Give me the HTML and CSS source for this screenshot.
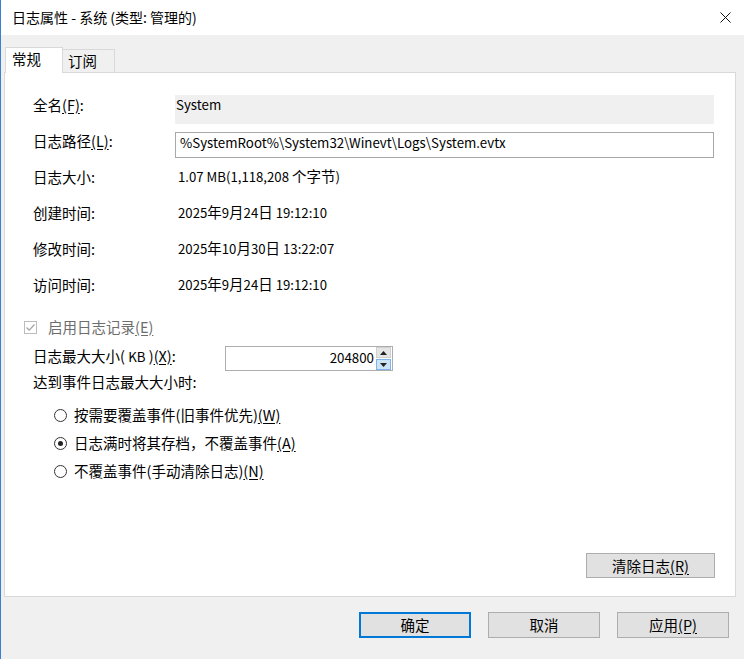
FILE: index.html
```html
<!DOCTYPE html>
<html lang="zh-CN">
<head>
<meta charset="utf-8">
<title>日志属性</title>
<link rel="stylesheet" href="styles.css">
</head>
<body>
<div class="window">
  <div class="titlebar">
    <span class="title">日志属性 - 系统 (类型: 管理的)</span>
    <svg class="close" width="11" height="11" viewBox="0 0 11 11"><path d="M0.5 0.5 L10.5 10.5 M10.5 0.5 L0.5 10.5" stroke="#111" stroke-width="1" fill="none"/></svg>
  </div>
  <div class="content">
    <div class="tabs">
      <div class="tab active">常规</div>
      <div class="tab">订阅</div>
    </div>
    <div class="panel">
      <div class="fields">
        <div class="row row-name">
          <div class="label">全名<u>(F)</u>:</div>
          <div class="readonly">System</div>
        </div>
        <div class="row row-path">
          <div class="label">日志路径<u>(L)</u>:</div>
          <div class="edit">%SystemRoot%\System32\Winevt\Logs\System.evtx</div>
        </div>
        <div class="row row-info first">
          <div class="label">日志大小:</div>
          <div class="value">1.07 MB(1,118,208 <span class="cjk">个字节</span>)</div>
        </div>
        <div class="row row-info">
          <div class="label">创建时间:</div>
          <div class="value">2025<span class="cjk">年</span>9<span class="cjk">月</span>24<span class="cjk">日</span> 19:12:10</div>
        </div>
        <div class="row row-info">
          <div class="label">修改时间:</div>
          <div class="value">2025<span class="cjk">年</span>10<span class="cjk">月</span>30<span class="cjk">日</span> 13:22:07</div>
        </div>
        <div class="row row-info">
          <div class="label">访问时间:</div>
          <div class="value">2025<span class="cjk">年</span>9<span class="cjk">月</span>24<span class="cjk">日</span> 19:12:10</div>
        </div>
      </div>

      <div class="check-row">
        <span class="checkbox"><svg width="11" height="11" viewBox="0 0 11 11"><path d="M1.5 5.5 L4.2 8.2 L9.5 2.5" stroke="#a2a2a2" stroke-width="1.2" fill="none"/></svg></span>
        <span class="disabled">启用日志记录<u>(E)</u></span>
      </div>

      <div class="spin-row">
        <div class="spin-label">日志最大大小( <span class="lat">KB</span> )<u>(X)</u>:</div>
        <div class="spinner">
          <span class="spin-value">204800</span>
          <span class="spin-buttons">
            <span class="spin-btn up"><svg width="7" height="4" viewBox="0 0 7 4"><path d="M0 4 L3.5 0 L7 4 Z" fill="#222"/></svg></span>
            <span class="spin-btn down"><svg width="7" height="4" viewBox="0 0 7 4"><path d="M0 0 L3.5 4 L7 0 Z" fill="#222"/></svg></span>
          </span>
        </div>
      </div>

      <div class="reach-row">达到事件日志最大大小时:</div>

      <div class="radios">
        <div class="radio-row"><span class="radio"></span><span>按需要覆盖事件(旧事件优先)<u>(W)</u></span></div>
        <div class="radio-row"><span class="radio checked"></span><span>日志满时将其存档，不覆盖事件<u>(A)</u></span></div>
        <div class="radio-row"><span class="radio"></span><span>不覆盖事件(手动清除日志)<u>(N)</u></span></div>
      </div>

      <div class="clear-row">
        <button class="btn clear">清除日志<u>(R)</u></button>
      </div>
    </div>
    <div class="footer">
      <button class="btn default">确定</button>
      <button class="btn">取消</button>
      <button class="btn">应用<u>(P)</u></button>
    </div>
  </div>
</div>
</body>
</html>
```

FILE: styles.css
```css
* { box-sizing: border-box; }

html, body {
  margin: 0;
  padding: 0;
}

body {
  font-family: "Noto Sans CJK SC", "Noto Sans", sans-serif;
  font-size: 14.5px;
  line-height: 20px;
  color: #000;
  background: #f0f0f0;
}

u { text-decoration: underline; text-underline-offset: 2px; }

.window {
  width: 744px;
  height: 659px;
  border-left: 1px solid #3a80d2;
  background: #f0f0f0;
  display: flex;
  flex-direction: column;
  overflow: hidden;
}

.titlebar {
  height: 35px;
  flex: none;
  background: #fff;
  display: flex;
  align-items: center;
  justify-content: space-between;
  padding-left: 11px;
  padding-right: 13px;
}

.title {
  font-size: 14px;
  padding-bottom: 1px;
}

.close { display: block; }

.content {
  flex: 1;
  display: flex;
  flex-direction: column;
  padding: 12px 8px 0 3px;
}

.tabs {
  height: 25px;
  display: flex;
  align-items: flex-end;
  padding-left: 1px;
}

.tab {
  height: 23px;
  width: 52px;
  border: 1px solid #d9d9d9;
  border-bottom: none;
  border-left: none;
  background: #f0f0f0;
  padding: 1px 0 0 5px;
}

.tab.active {
  height: 26px;
  width: 58px;
  margin-bottom: -1px;
  border-left: 1px solid #d9d9d9;
  background: #fff;
  padding: 1px 0 0 6px;
  position: relative;
  z-index: 1;
}

.panel {
  height: 525px;
  flex: none;
  border: 1px solid #d9d9d9;
  background: #fff;
  display: flex;
  flex-direction: column;
}

.fields {
  padding: 22px 21px 0 28px;
}

.row {
  display: flex;
  align-items: flex-start;
}

.label {
  width: 142px;
  flex: none;
  white-space: nowrap;
}

.readonly {
  flex: 1;
  height: 29px;
  background: #f0f0f0;
  padding-left: 1px;
  font-size: 13.3px;
}

.row-path { margin-top: 8px; }

.edit {
  flex: 1;
  height: 26px;
  border: 1px solid #a8a8a8;
  padding-left: 4px;
  line-height: 20px;
  white-space: nowrap;
  font-size: 13.3px;
}

.row-path .label { margin-top: -1px; }

.row-info {
  margin-top: 16px;
  height: 20px;
}
.row-info.first { margin-top: 9px; }

.value {
  padding-left: 3px;
  white-space: nowrap;
  font-size: 13.2px;
  height: 20px;
}

.cjk { font-size: 14.5px; line-height: 1; }
.lat { font-size: 13.3px; line-height: 1; }

.check-row {
  margin-top: 22px;
  margin-left: 19px;
  display: flex;
  align-items: center;
  height: 20px;
}

.checkbox {
  width: 13px;
  height: 13px;
  border: 1px solid #bcbcbc;
  display: flex;
  align-items: center;
  justify-content: center;
  margin-right: 11px;
}

.checkbox svg { display: block; }

.disabled { color: #6d6d6d; }

.spin-row {
  margin-top: 9px;
  margin-left: 28px;
  display: flex;
  align-items: flex-start;
  height: 25px;
}

.spin-label {
  width: 192px;
  flex: none;
  white-space: nowrap;
  height: 20px;
}

.spinner {
  width: 168px;
  height: 25px;
  border: 1px solid #adadad;
  display: flex;
  align-items: center;
  justify-content: flex-end;
  padding-right: 1px;
}

.spin-value {
  padding-right: 2px;
  margin-top: -1px;
  font-size: 13.3px;
}

.spin-buttons {
  width: 15px;
  height: 23px;
  display: flex;
  flex-direction: column;
  gap: 1px;
}

.spin-btn {
  flex: 1;
  display: flex;
  align-items: center;
  justify-content: center;
  background: #e5e5e5;
  border: 1px solid #d0d0d0;
}

.spin-btn.down {
  background: #cce4f7;
  border-color: #7eb4ea;
}

.spin-btn svg { display: block; }

.reach-row {
  margin-left: 28px;
  margin-top: 1px;
}

.radios {
  margin-top: 13px;
  margin-left: 49px;
  display: flex;
  flex-direction: column;
  gap: 8px;
}

.radio-row {
  display: flex;
  align-items: center;
  height: 20px;
}

.radio {
  width: 13px;
  height: 13px;
  border: 1px solid #333;
  border-radius: 50%;
  margin-right: 7px;
  display: flex;
  align-items: center;
  justify-content: center;
  flex: none;
}

.radio.checked::after {
  content: "";
  width: 5px;
  height: 5px;
  border-radius: 50%;
  background: #222;
}

.clear-row {
  margin-top: auto;
  padding: 0 20px 18px 0;
  display: flex;
  justify-content: flex-end;
}

.btn {
  font-family: "Noto Sans CJK SC", "Noto Sans", sans-serif;
  font-size: 14.5px;
  line-height: 20px;
  color: #000;
  background: #e1e1e1;
  border: 1px solid #adadad;
  padding: 0;
  margin: 0;
}

.btn.clear {
  width: 129px;
  height: 25px;
}

.footer {
  flex: 1;
  display: flex;
  justify-content: flex-end;
  align-items: flex-start;
  gap: 17px;
  padding-top: 15px;
  padding-right: 7px;
}

.footer .btn {
  width: 112px;
  height: 26px;
}

.footer .btn.default {
  border: 2px solid #0078d7;
}
```
